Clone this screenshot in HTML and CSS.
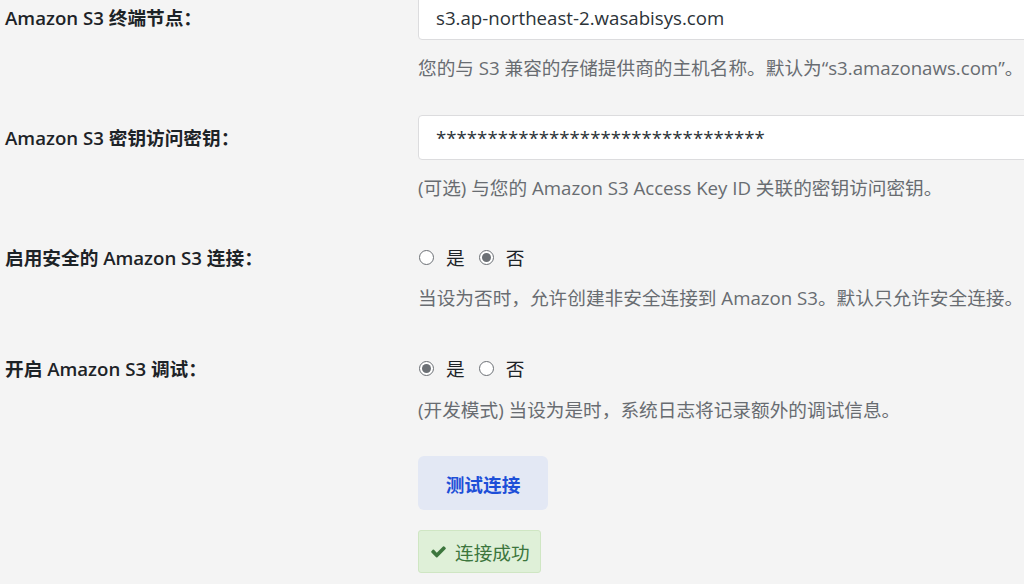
FILE: index.html
```html
<!DOCTYPE html>
<html lang="zh-CN">
<head>
<meta charset="utf-8">
<title>Amazon S3 设置</title>
<link rel="stylesheet" href="styles.css">
</head>
<body>
<div class="page">
  <div class="row row-first">
    <div class="label label-input">Amazon S3 终端节点：</div>
    <div class="cell">
      <input class="text-input" type="text" value="s3.ap-northeast-2.wasabisys.com">
      <p class="desc">您的与 S3 兼容的存储提供商的主机名称。默认为“s3.amazonaws.com”。</p>
    </div>
  </div>
  <div class="row row-input">
    <div class="label label-input">Amazon S3 密钥访问密钥：</div>
    <div class="cell">
      <input class="text-input" type="text" value="********************************">
      <p class="desc">(可选) 与您的 Amazon S3 Access Key ID 关联的密钥访问密钥。</p>
    </div>
  </div>
  <div class="row row-radio1">
    <div class="label label-radio">启用安全的 Amazon S3 连接：</div>
    <div class="cell">
      <div class="radios">
        <label class="radio"><input type="radio" name="secure"><span>是</span></label>
        <label class="radio"><input type="radio" name="secure" checked><span>否</span></label>
      </div>
      <p class="desc desc-radio">当设为否时，允许创建非安全连接到 Amazon S3。默认只允许安全连接。</p>
    </div>
  </div>
  <div class="row row-radio2">
    <div class="label label-radio">开启 Amazon S3 调试：</div>
    <div class="cell">
      <div class="radios">
        <label class="radio"><input type="radio" name="debug" checked><span>是</span></label>
        <label class="radio"><input type="radio" name="debug"><span>否</span></label>
      </div>
      <p class="desc">(开发模式) 当设为是时，系统日志将记录额外的调试信息。</p>
      <button class="btn" type="button">测试连接</button>
      <div class="notice">
        <svg class="check" viewBox="0 0 1792 1792" aria-hidden="true"><path d="M1671 566q0 40-28 68l-724 724-136 136q-28 28-68 28t-68-28l-136-136-362-362q-28-28-28-68t28-68l136-136q28-28 68-28t68 28l294 295 656-657q28-28 68-28t68 28l136 136q28 28 28 68z"/></svg>
        <span>连接成功</span>
      </div>
    </div>
  </div>
</div>
</body>
</html>
```
FILE: styles.css
```css
html, body {
  margin: 0;
  padding: 0;
  background: #f4f4f4;
  overflow: hidden;
}
body {
  font-family: "Open Sans", "Noto Sans CJK SC", sans-serif;
  color: #1d2327;
  font-size: 18.67px;
}
.page {
  padding-left: 5px;
  width: 1200px;
}
.row {
  display: grid;
  grid-template-columns: 413px 1fr;
  align-items: start;
}
.row-first { margin-top: -5px; }
.row-input { margin-top: 34px; }
.row-radio1 { margin-top: 43px; }
.row-radio2 { margin-top: 44px; }

.label {
  font-weight: 600;
  color: #1d2327;
  white-space: nowrap;
}
.label-input { line-height: 45px; }
.label-radio { line-height: 27px; }

.cell {
  display: flex;
  flex-direction: column;
  align-items: flex-start;
}
.text-input {
  box-sizing: border-box;
  width: 700px;
  height: 45px;
  margin: 0;
  padding: 0 17px;
  border: 1px solid #dcdcde;
  border-radius: 4px;
  background: #fff;
  font-family: "Open Sans", "Noto Sans CJK SC", sans-serif;
  font-size: 18.67px;
  color: #2c3338;
  outline: none;
}
.desc {
  margin: 14px 0 0;
  line-height: 27px;
  font-size: 18.67px;
  color: #686c71;
  white-space: nowrap;
}
.desc-radio { margin-top: 13px; }

.radios {
  display: flex;
  gap: 13px;
  line-height: 27px;
  height: 27px;
  align-items: center;
}
.radio {
  display: flex;
  align-items: center;
  gap: 12px;
  color: #1d2327;
  font-size: 18.67px;
}
.radio input {
  -webkit-appearance: none;
  appearance: none;
  box-sizing: border-box;
  width: 15px;
  height: 15px;
  margin: 0 0 0 1px;
  border: 1px solid #6c7075;
  border-radius: 50%;
  background: #fff;
  display: grid;
  place-items: center;
}
.radio input:checked::before {
  content: "";
  width: 9px;
  height: 9px;
  border-radius: 50%;
  background: #6c7075;
}

.btn {
  margin-top: 33px;
  box-sizing: border-box;
  width: 130px;
  height: 54px;
  border: 0;
  border-radius: 6px;
  background: #e3e8f4;
  color: #1d4fd8;
  font-family: "Open Sans", "Noto Sans CJK SC", sans-serif;
  font-size: 18.67px;
  font-weight: 700;
  padding: 0;
}
.notice {
  margin-top: 20px;
  box-sizing: border-box;
  height: 43px;
  padding: 0 10px 0 11px;
  display: flex;
  align-items: center;
  gap: 8px;
  background: #dff0d8;
  border: 1px solid #cfe6c3;
  border-radius: 3px;
  color: #3c763d;
  font-size: 18.67px;
}
.check {
  width: 17px;
  height: 17px;
  fill: #3c763d;
}
```
